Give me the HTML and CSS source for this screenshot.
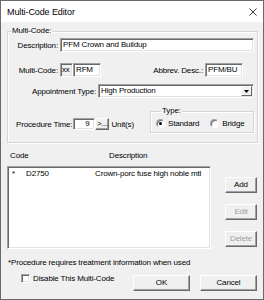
FILE: index.html
```html
<!DOCTYPE html>
<html lang="en">
<head>
    <meta charset="UTF-8">
    <title>Multi-Code Editor</title>
    <link rel="stylesheet" href="styles.css">
</head>
<body>
    <div class="window">
        <div class="titlebar">
            <span class="title">Multi-Code Editor</span>
            <svg class="close" viewBox="0 0 9 9">
                <line x1="0.5" y1="0.5" x2="8.5" y2="8.5"></line>
                <line x1="8.5" y1="0.5" x2="0.5" y2="8.5"></line>
            </svg>
        </div>
        <div class="client">
            <fieldset class="group main-group">
                <legend>Multi-Code:</legend>
                <div class="row row-desc">
                    <span class="lbl lbl-short">Description:</span>
                    <div class="field desc-field">PFM Crown and Buildup</div>
                </div>
                <div class="row row-code">
                    <span class="lbl lbl-short">Multi-Code:</span>
                    <div class="field prefix">xx</div>
                    <div class="field code-field">RFM</div>
                    <span class="lbl abbrev-lbl">Abbrev. Desc.:</span>
                    <div class="field abbrev-field">PFM/BU</div>
                </div>
                <div class="row row-appt">
                    <span class="lbl lbl-long">Appointment Type:</span>
                    <div class="field select">
                        <span class="select-text">High Production</span>
                        <span class="drop-btn">
                            <svg viewBox="0 0 5 3"><polygon points="0,0 5,0 2.5,3"></polygon></svg>
                        </span>
                    </div>
                </div>
                <div class="row row-bottom">
                    <div class="proc">
                        <span class="lbl">Procedure Time:</span>
                        <div class="field time-field">9</div>
                        <div class="btn more-btn">&gt;...</div>
                        <span class="units">Unit(s)</span>
                    </div>
                    <fieldset class="group type-group">
                        <legend>Type:</legend>
                        <label class="radio"><span class="radio-dot checked"></span>Standard</label>
                        <label class="radio"><span class="radio-dot"></span>Bridge</label>
                    </fieldset>
                </div>
            </fieldset>

            <div class="codes">
                <div class="list-col">
                    <div class="list-head">
                        <span class="col-code">Code</span>
                        <span>Description</span>
                    </div>
                    <div class="listbox">
                        <div class="list-row">
                            <span class="col-star">*</span>
                            <span class="col-id">D2750</span>
                            <span>Crown-porc fuse high noble mtl</span>
                        </div>
                    </div>
                </div>
                <div class="side-buttons">
                    <div class="btn side-btn">Add</div>
                    <div class="btn side-btn disabled">Edit</div>
                    <div class="btn side-btn disabled">Delete</div>
                </div>
            </div>

            <div class="note">*Procedure requires treatment information when used</div>

            <div class="footer">
                <label class="check"><span class="check-box"></span>Disable This Multi-Code</label>
                <div class="btn dlg-btn ok-btn">OK</div>
                <div class="btn dlg-btn">Cancel</div>
            </div>
        </div>
    </div>
</body>
</html>
```

FILE: styles.css
```css
body {
    margin: 0;
    font-family: "Liberation Sans", Arial, sans-serif;
    font-size: 8px;
    letter-spacing: -0.15px;
    color: #000;
    background-color: #f0f0f0;
}

.window {
    width: 264px;
    height: 300px;
    box-sizing: border-box;
    border: 1px solid #6a6a6a;
    background-color: #f0f0f0;
    display: flex;
    flex-direction: column;
}

.titlebar {
    height: 21px;
    background-color: #fff;
    display: flex;
    align-items: center;
    justify-content: space-between;
    padding: 0 6px 0 6px;
}

.title {
    font-size: 9px;
    letter-spacing: -0.1px;
}

.close {
    width: 8px;
    height: 8px;
    stroke: #222;
    stroke-width: 1;
}

.client {
    padding: 4px 5px 0 6px;
}

/* group boxes */
.group {
    margin: 0;
    border: 1px solid #d5d5d5;
    box-shadow: inset 1px 1px #fff, 1px 1px #fff;
    min-width: 0;
}

.group legend {
    padding: 0 1px;
    line-height: 10px;
}

.main-group {
    padding: 2px 3px 9px 0;
}

.main-group > legend {
    margin-left: 3px;
}

.row {
    display: flex;
    align-items: center;
}

.lbl {
    white-space: nowrap;
}

.lbl-short {
    width: 50px;
    text-align: right;
    margin-right: 2px;
}

.lbl-long {
    width: 88px;
    text-align: right;
    margin-right: 2px;
}

/* sunken edit fields */
.field {
    height: 14px;
    box-sizing: border-box;
    background-color: #fff;
    border: 1px solid;
    border-color: #a0a0a0 #fff #fff #a0a0a0;
    box-shadow: inset 1px 1px #696969, inset -1px -1px #e3e3e3;
    padding: 0 2px;
    line-height: 12px;
    white-space: nowrap;
    overflow: hidden;
}

.row-desc {
    height: 14px;
}

.desc-field {
    flex: 1;
}

.row-code {
    margin-top: 11px;
}

.prefix {
    width: 13px;
    background-color: #f0f0f0;
    padding: 0 1px;
}

.code-field {
    width: 28px;
}

.abbrev-lbl {
    margin-left: auto;
    margin-right: 2px;
}

.abbrev-field {
    width: 38px;
    margin-right: 11px;
}

.row-appt {
    margin-top: 7px;
}

.select {
    flex: 1;
    display: flex;
    align-items: center;
    padding-right: 1px;
}

.select-text {
    flex: 1;
}

.drop-btn {
    width: 11px;
    height: 10px;
    box-sizing: border-box;
    border: 1px solid;
    border-color: #fff #696969 #696969 #fff;
    background-color: #f0f0f0;
    display: flex;
    align-items: center;
    justify-content: center;
}

.drop-btn svg {
    width: 5px;
    height: 3px;
    fill: #000;
}

.row-bottom {
    margin-top: 8px;
    align-items: flex-end;
}

.proc {
    display: flex;
    align-items: center;
    margin-left: 8px;
    margin-bottom: 3px;
}

.time-field {
    width: 22px;
    height: 12px;
    line-height: 10px;
    text-align: right;
    padding-right: 5px;
    margin-left: 1px;
}

.more-btn {
    width: 14px;
    height: 12px;
    line-height: 10px;
}

.units {
    margin-left: 2px;
}

.type-group {
    margin-left: auto;
    width: 104px;
    box-sizing: border-box;
    padding: 2px 0 4px 5px;
    display: flex;
}

.type-group legend {
    margin-left: 5px;
}

.radio {
    display: flex;
    align-items: center;
    height: 10px;
    margin-right: 11px;
}

.radio-dot {
    width: 9px;
    height: 9px;
    box-sizing: border-box;
    border-radius: 50%;
    border: 1px solid;
    border-color: #a0a0a0 #fff #fff #a0a0a0;
    box-shadow: inset 1px 1px #696969;
    background-color: #fff;
    margin-right: 3px;
    position: relative;
}

.radio-dot.checked::after {
    content: "";
    position: absolute;
    left: 2px;
    top: 2px;
    width: 3px;
    height: 3px;
    border-radius: 50%;
    background-color: #000;
}

/* buttons */
.btn {
    box-sizing: border-box;
    border: 1px solid;
    border-color: #fff #696969 #696969 #fff;
    box-shadow: inset -1px -1px #a0a0a0;
    background-color: #f0f0f0;
    text-align: center;
    white-space: nowrap;
}

.btn.disabled {
    color: #a0a0a0;
}

/* code list */
.codes {
    display: flex;
    margin-top: 8px;
}

.list-col {
    width: 204px;
}

.list-head {
    display: flex;
    line-height: 10px;
    padding-left: 3px;
}

.col-code {
    width: 99px;
}

.listbox {
    margin-top: 5px;
    height: 83px;
    box-sizing: border-box;
    background-color: #fff;
    border: 1px solid;
    border-color: #a0a0a0 #fff #fff #a0a0a0;
    box-shadow: inset 1px 1px #696969, inset -1px -1px #e3e3e3;
    padding: 2px 0 0 4px;
}

.list-row {
    display: flex;
    line-height: 10px;
}

.col-star {
    width: 14px;
}

.col-id {
    width: 69px;
}

.side-buttons {
    margin-left: auto;
    margin-right: 1px;
    padding-top: 26px;
    display: flex;
    flex-direction: column;
    gap: 11px;
}

.side-btn {
    width: 32px;
    height: 16px;
    line-height: 14px;
}

.note {
    margin-top: 9px;
    line-height: 10px;
    padding-left: 1px;
}

.footer {
    display: flex;
    align-items: flex-start;
    margin-top: 5px;
}

.check {
    display: flex;
    align-items: center;
    height: 10px;
    margin-left: 14px;
}

.check-box {
    width: 9px;
    height: 9px;
    box-sizing: border-box;
    background-color: #fff;
    border: 1px solid;
    border-color: #a0a0a0 #fff #fff #a0a0a0;
    box-shadow: inset 1px 1px #696969, inset -1px -1px #e3e3e3;
    margin-right: 3px;
}

.dlg-btn {
    width: 57px;
    height: 16px;
    line-height: 14px;
    margin-top: 2px;
    margin-left: 10px;
}

.ok-btn {
    margin-left: auto;
}

.footer .dlg-btn:last-child {
    margin-right: 1px;
}
```
